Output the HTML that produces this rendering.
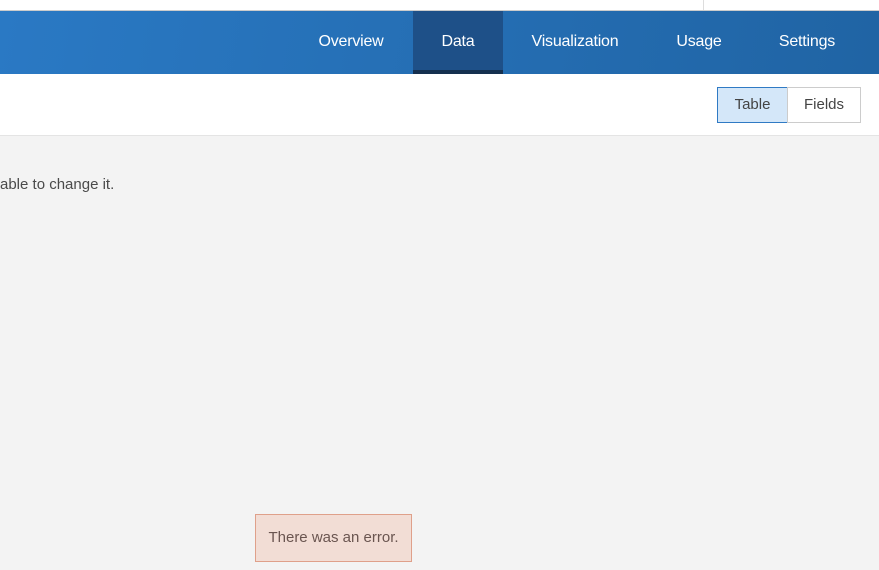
<!DOCTYPE html>
<html><head><style>
body{margin:0;width:879px;height:570px;overflow:hidden;background:#f3f3f3;font-family:"Liberation Sans",sans-serif;position:relative}
.top{position:absolute;left:0;top:0;width:879px;height:10px;background:#fff;border-bottom:1px solid #ccc}
.top i{position:absolute;left:703px;top:0;width:1px;height:10px;background:#ddd}
.nav{position:absolute;left:0;top:11px;width:879px;height:63px;background:linear-gradient(100deg,#2a79c4,#2064a4)}
.nav a{position:absolute;top:0;height:63px;line-height:61px;color:#fff;font-size:16px;text-align:center;letter-spacing:-0.2px}
.nav .act{background:#1e5088;border-bottom:4px solid #15304f;box-sizing:border-box}
.bar{position:absolute;left:0;top:74px;width:879px;height:61px;background:#fff;border-bottom:1px solid #e4e4e4}
.btn{position:absolute;top:87px;height:36px;line-height:34px;font-size:15px;text-align:center;box-sizing:border-box;color:#444}
.msg{position:absolute;left:0;top:176px;font-size:15px;color:#4a4a4a}
.err{position:absolute;left:255px;top:514px;width:157px;height:48px;box-sizing:border-box;background:#f2ddd5;border:1px solid #dfa08a;font-size:15px;color:#6a5550;line-height:46px;text-align:center}
</style></head><body>
<div class="top"><i></i></div>
<div class="nav">
<a style="left:300px;width:102px">Overview</a>
<a class="act" style="left:413px;width:90px">Data</a>
<a style="left:515px;width:120px">Visualization</a>
<a style="left:660px;width:78px">Usage</a>
<a style="left:762px;width:90px">Settings</a>
</div>
<div class="bar"></div>
<div class="btn" style="left:717px;width:71px;background:#d4e7f9;border:1px solid #2f7ac4">Table</div>
<div class="btn" style="left:787px;width:74px;background:#fff;border:1px solid #ccc">Fields</div>
<div class="msg">able to change it.</div>
<div class="err">There was an error.</div>
</body></html>
